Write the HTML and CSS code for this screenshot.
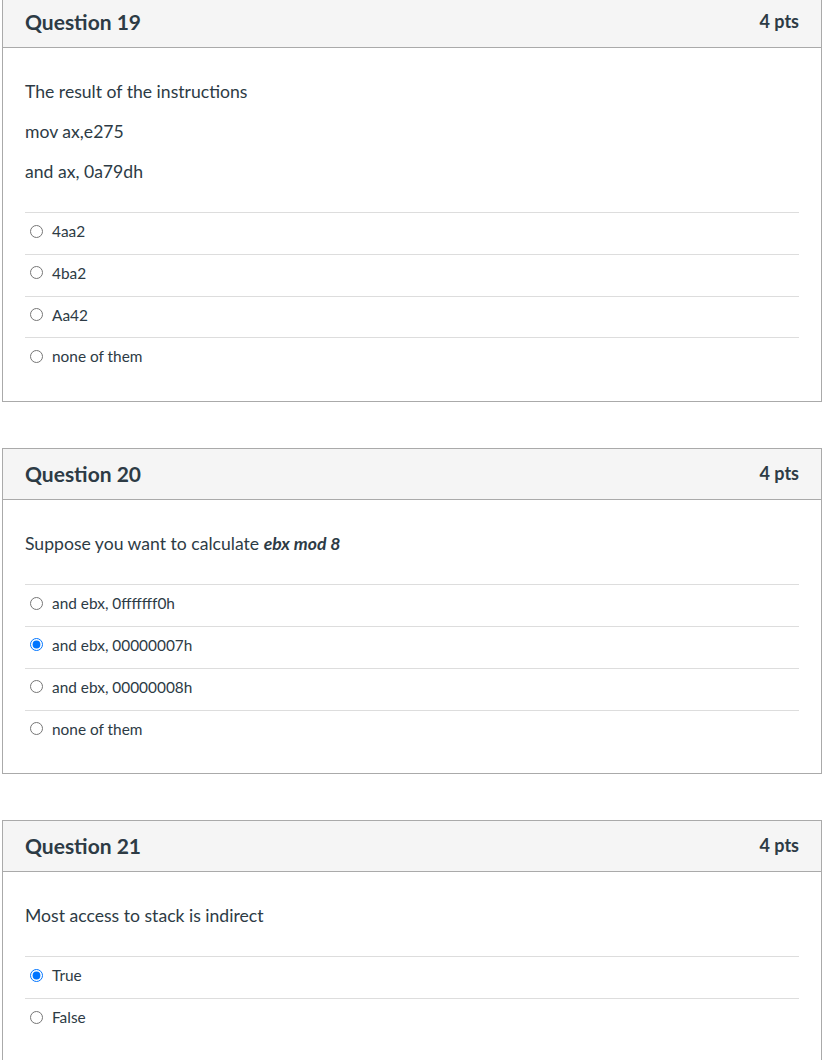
FILE: index.html
```html
<!DOCTYPE html>
<html lang="en">
<head>
    <meta charset="UTF-8">
    <meta name="viewport" content="width=device-width, initial-scale=1.0">
    <title>Quiz</title>
    <link rel="stylesheet" href="styles.css">
</head>
<body>
    <div class="quiz">
        <div class="question">
            <div class="question-header">
                <span class="question-title">Question 19</span>
                <span class="question-points">4 pts</span>
            </div>
            <div class="question-body">
                <div class="question-text">
                    <p>The result of the instructions</p>
                    <p>mov ax,e275</p>
                    <p>and ax, 0a79dh</p>
                </div>
                <div class="answers">
                    <label class="answer"><input type="radio" name="q19">4aa2</label>
                    <label class="answer"><input type="radio" name="q19">4ba2</label>
                    <label class="answer"><input type="radio" name="q19">Aa42</label>
                    <label class="answer"><input type="radio" name="q19">none of them</label>
                </div>
            </div>
        </div>

        <div class="question">
            <div class="question-header">
                <span class="question-title">Question 20</span>
                <span class="question-points">4 pts</span>
            </div>
            <div class="question-body">
                <div class="question-text">
                    <p>Suppose you want to calculate <strong><em>ebx mod 8</em></strong></p>
                </div>
                <div class="answers">
                    <label class="answer"><input type="radio" name="q20">and ebx, 0fffffff0h</label>
                    <label class="answer"><input type="radio" name="q20" checked>and ebx, 00000007h</label>
                    <label class="answer"><input type="radio" name="q20">and ebx, 00000008h</label>
                    <label class="answer"><input type="radio" name="q20">none of them</label>
                </div>
            </div>
        </div>

        <div class="question">
            <div class="question-header">
                <span class="question-title">Question 21</span>
                <span class="question-points">4 pts</span>
            </div>
            <div class="question-body">
                <div class="question-text">
                    <p>Most access to stack is indirect</p>
                </div>
                <div class="answers">
                    <label class="answer"><input type="radio" name="q21" checked>True</label>
                    <label class="answer"><input type="radio" name="q21">False</label>
                </div>
            </div>
        </div>
    </div>
</body>
</html>
```

FILE: styles.css
```css
body {
    margin: 0;
    padding: 0;
    font-family: Lato, "Liberation Sans", sans-serif;
    color: #2d3b45;
    background: #fff;
}

.quiz {
    margin-top: -4px;
}

.question {
    border: 1px solid #aaa;
    margin: 0 4px 46px 2px;
}

.question-header {
    display: flex;
    justify-content: space-between;
    align-items: center;
    height: 48px;
    padding: 0 22px 2px;
    background: #f5f5f5;
    border-bottom: 1px solid #aaa;
}

.question-title {
    font-size: 21px;
    font-weight: bold;
}

.question-points {
    font-size: 18px;
    font-weight: bold;
}

.question-body {
    padding: 32px 22px 22px;
}

.question-text p {
    margin: 0 0 16px;
    font-size: 17.6px;
    line-height: 24px;
}

.question-text p:last-child {
    margin-bottom: 0;
}

.answers {
    margin-top: 28px;
}

.answer {
    display: flex;
    align-items: center;
    border-top: 1px solid #ddd;
    padding: 8px 0 12.8px;
    font-size: 15.4px;
    line-height: 20px;
}

.answer input {
    margin: 0 9px 0 5px;
    width: 13px;
    height: 13px;
}
```
